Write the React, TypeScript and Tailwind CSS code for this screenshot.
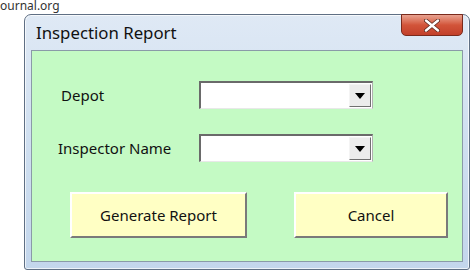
import React from "react";

function Combo() {
  return (
    <div className="flex h-[28px] w-[174px] border-t-2 border-l-2 border-b border-r border-t-[#6a6a6a] border-l-[#6a6a6a] border-b-[#e8e8e8] border-r-[#b0b0b0] bg-white">
      <div className="flex-1" />
      <div className="my-[1px] mr-[1px] flex w-[22px] items-center justify-center border border-t-[#f4f4f4] border-l-[#f4f4f4] border-b-[#707070] border-r-[#707070] bg-[#ececec]">
        <svg width="10" height="6" viewBox="0 0 10 6">
          <polygon points="0,0 10,0 5,6" fill="#000" />
        </svg>
      </div>
    </div>
  );
}

function Btn({ label, w }: { label: string; w: string }) {
  return (
    <div
      className={`${w} flex h-[46px] items-center justify-center border-t-2 border-l-2 border-b-2 border-r-2 border-t-white border-l-white border-b-[#7a7a7a] border-r-[#7a7a7a] bg-[#ffffc4] text-[15px] text-[#111]`}
    >
      {label}
    </div>
  );
}

export default function App() {
  return (
    <div
      className="h-[271px] w-[474px] overflow-hidden bg-white"
      style={{ fontFamily: '"Noto Sans", "Open Sans", sans-serif' }}
    >
      <div className="-mt-[2px] h-[16px] text-[12px] leading-[15px] text-[#333]">ournal.org</div>
      <div className="ml-[24px] flex h-[256px] w-[446px] flex-col rounded-t-[7px] rounded-b-[3px] border border-[#5f6f84] bg-gradient-to-b from-[#dfe9f5] via-[#cfdff0] to-[#c3d6ec] shadow-[inset_0_0_0_1px_rgba(255,255,255,0.7)]">
        <div className="flex h-[35px] items-start justify-between pl-[11px] pr-[6px]">
          <div className="pt-[7px] text-[16.8px] leading-[22px] text-[#111]">Inspection Report</div>
          <div className="-mt-[1px] flex h-[22px] w-[62px] items-center justify-center rounded-b-[5px] border border-[#7a2a1c] bg-gradient-to-b from-[#e8a290] via-[#d2543a] to-[#c2402a]">
            <svg width="16" height="13" viewBox="0 0 16 13">
              <path d="M2 1.5 L14 11.5 M14 1.5 L2 11.5" stroke="#5a2a20" strokeWidth="4" strokeLinecap="round" />
              <path d="M2 1.5 L14 11.5 M14 1.5 L2 11.5" stroke="#fff" strokeWidth="2.4" strokeLinecap="round" />
            </svg>
          </div>
        </div>
        <div className="mx-[6px] flex h-[212px] flex-col border border-[#8a9aa8] bg-[#c4fac4]">
          <div className="flex h-[28px] items-center pl-[29px] mt-[30px]">
            <div className="w-[138px] text-[15px] text-[#111]">Depot</div>
            <Combo />
          </div>
          <div className="mt-[25px] flex h-[28px] items-center pl-[26px]">
            <div className="w-[141px] text-[15px] text-[#111]">Inspector Name</div>
            <Combo />
          </div>
          <div className="mt-[30px] flex pl-[38px]">
            <Btn label="Generate Report" w="w-[177px]" />
            <div className="w-[47px]" />
            <Btn label="Cancel" w="w-[154px]" />
          </div>
        </div>
      </div>
    </div>
  );
}
